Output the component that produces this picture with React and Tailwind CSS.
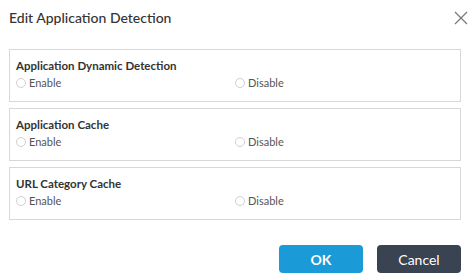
import React from 'react';

const sections = ['Application Dynamic Detection', 'Application Cache', 'URL Category Cache'];

const Radio = ({ label }) => (
  <label className="flex items-center gap-[3px] text-[11px] text-[#555]">
    <span className="w-[10px] h-[10px] rounded-full border border-[#d0d0d0] bg-white" />
    {label}
  </label>
);

const App = () => {
  return (
    <div className="w-[474px] h-[280px] bg-white overflow-hidden" style={{ fontFamily: 'Lato, "Open Sans", sans-serif' }}>
      {/* header */}
      <div className="flex items-center justify-between h-[35px] pl-[9px] pr-[6px]">
        <h1 className="text-[14px] text-[#333] font-medium">Edit Application Detection</h1>
        <svg width="14" height="14" viewBox="0 0 14 14" className="text-[#777]">
          <path d="M1 1 L13 13 M13 1 L1 13" stroke="currentColor" strokeWidth="1.2" fill="none" />
        </svg>
      </div>

      <div className="pl-[9px] pr-[13px] pt-[14px] flex flex-col gap-[6px]">
        {sections.map((title) => (
          <div key={title} className="h-[53px] border border-[#d8d8d8] px-[6px] pt-[8px]">
            <div className="text-[11.5px] font-bold text-[#333] leading-[15px]">{title}</div>
            <div className="grid grid-cols-2 mt-[2px]">
              <Radio label="Enable" />
              <Radio label="Disable" />
            </div>
          </div>
        ))}
      </div>

      {/* footer */}
      <div className="flex justify-end gap-[14px] pr-[13px] mt-[25px]">
        <button className="w-[84px] h-[28px] rounded-[4px] bg-[#1b9ad8] text-white text-[14px] font-bold">OK</button>
        <button className="w-[84px] h-[28px] rounded-[4px] bg-[#3a4351] text-white text-[14px]">Cancel</button>
      </div>
    </div>
  );
};

export default App;
